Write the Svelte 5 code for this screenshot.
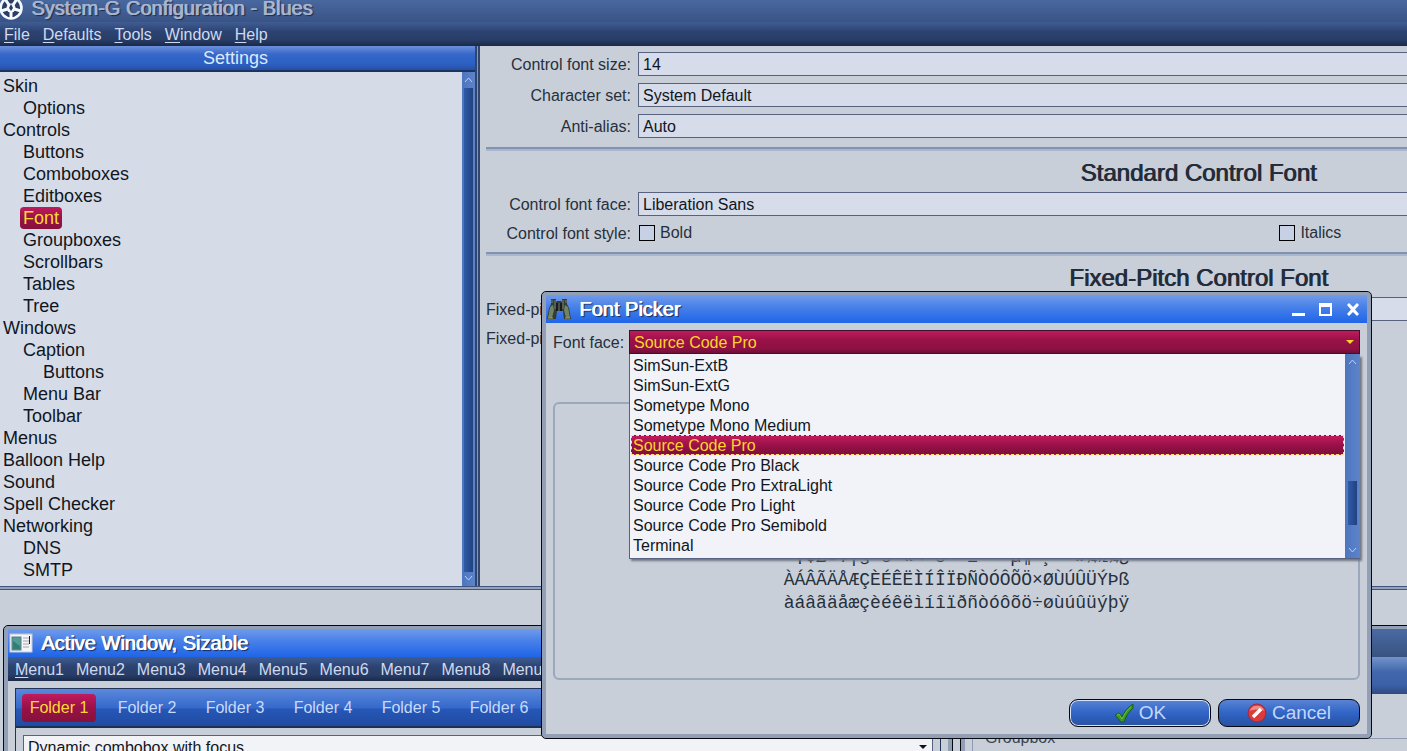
<script>
    var menus = ["File", "Defaults", "Tools", "Window", "Help"];
    var previewMenus = ["Menu1", "Menu2", "Menu3", "Menu4", "Menu5", "Menu6", "Menu7", "Menu8", "Menu9"];
    var folders = ["Folder 1", "Folder 2", "Folder 3", "Folder 4", "Folder 5", "Folder 6"];
    var sections = [
        { name: "Skin", level: 0 },
        { name: "Options", level: 1 },
        { name: "Controls", level: 0 },
        { name: "Buttons", level: 1 },
        { name: "Comboboxes", level: 1 },
        { name: "Editboxes", level: 1 },
        { name: "Font", level: 1 },
        { name: "Groupboxes", level: 1 },
        { name: "Scrollbars", level: 1 },
        { name: "Tables", level: 1 },
        { name: "Tree", level: 1 },
        { name: "Windows", level: 0 },
        { name: "Caption", level: 1 },
        { name: "Buttons", level: 2 },
        { name: "Menu Bar", level: 1 },
        { name: "Toolbar", level: 1 },
        { name: "Menus", level: 0 },
        { name: "Balloon Help", level: 0 },
        { name: "Sound", level: 0 },
        { name: "Spell Checker", level: 0 },
        { name: "Networking", level: 0 },
        { name: "DNS", level: 1 },
        { name: "SMTP", level: 1 }
    ];
    var fonts = [
        "SimSun-ExtB", "SimSun-ExtG", "Sometype Mono", "Sometype Mono Medium",
        "Source Code Pro", "Source Code Pro Black", "Source Code Pro ExtraLight",
        "Source Code Pro Light", "Source Code Pro Semibold", "Terminal"
    ];
    var sample = [
        "\u00a0¡¢£¤¥¦§¨©ª«¬\u00a0®¯°±²³´µ¶·¸¹º»¼½¾¿",
        "ÀÁÂÃÄÅÆÇÈÉÊËÌÍÎÏÐÑÒÓÔÕÖ×ØÙÚÛÜÝÞß",
        "àáâãäåæçèéêëìíîïðñòóôõö÷øùúûüýþÿ"
    ];

    let section = "Font";
    let folder = "Folder 1";
    let fontFace = "Source Code Pro";
</script>

<main>
    <header class="appbar">
        <svg class="logo" viewBox="0 0 24 24">
            <circle cx="12" cy="12" r="10.500" fill="#2b3d63" stroke="#f4f8ff" stroke-width="2.600" />
            <path d="M12 12v10M12 12l-10 3M12 12l10 3M12 12L6 3M12 12l6-9" stroke="#f4f8ff" stroke-width="3" />
            <circle cx="12" cy="12" r="4.500" fill="#f4f8ff" />
            <path d="M12 8l2 4-2 3-2-3z" fill="#2b3d63" />
        </svg>
        <h1>System-G Configuration - Blues</h1>
    </header>
    <nav class="menubar">
        {#each menus as menu}
            <button><u>{menu[0]}</u>{menu.slice(1)}</button>
        {/each}
    </nav>

    <div class="workspace">
        <aside>
            <h2 class="panelhead">Settings</h2>
            <div class="treebox">
                <ul class="tree">
                    {#each sections as item}
                        <li style="padding-left: {item.level * 20}px">
                            <button class:selected={item.name == section} on:click={() => section = item.name}>{item.name}</button>
                        </li>
                    {/each}
                </ul>
                <div class="scroll">
                    <svg viewBox="0 0 9 6"><path d="M1 5l3.500-4L8 5" /></svg>
                    <div class="thumb full"></div>
                    <svg viewBox="0 0 9 6"><path d="M1 1l3.500 4L8 1" /></svg>
                </div>
            </div>
        </aside>

        <section class="form">
            <div class="fields">
                <div class="row first">
                    <label for="size">Control font size:</label>
                    <select id="size"><option>14</option></select>
                </div>
                <div class="row first">
                    <label for="charset">Character set:</label>
                    <select id="charset"><option>System Default</option></select>
                </div>
                <div class="row first">
                    <label for="alias">Anti-alias:</label>
                    <select id="alias"><option>Auto</option></select>
                </div>
                <hr>
                <h3>Standard Control Font</h3>
                <div class="row">
                    <label for="face">Control font face:</label>
                    <select id="face"><option>Liberation Sans</option></select>
                </div>
                <div class="row">
                    <span class="caption">Control font style:</span>
                    <div class="checks">
                        <label><input type="checkbox">Bold</label>
                        <label><input type="checkbox">Italics</label>
                    </div>
                </div>
                <hr>
                <h3>Fixed-Pitch Control Font</h3>
                <div class="row fixed">
                    <label for="fixedface">Fixed-pitch font face:</label>
                    <select id="fixedface"><option></option></select>
                </div>
                <div class="row fixed">
                    <span class="caption">Fixed-pitch font style:</span>
                </div>
            </div>
        </section>
    </div>

    <div class="preview">
        <div class="window active">
            <div class="titlebar">
                <svg class="appicon" viewBox="0 0 24 22">
                    <rect x="1" y="2" width="22" height="18" fill="#f5f6f8" stroke="#c3cbd6" />
                    <rect x="3" y="5" width="9" height="13" fill="#4f9d93" stroke="#5c7690" />
                    <path d="M4 17V9l7 5v3z" fill="#2f7f72" />
                    <path d="M14 6h6M14 9h6M14 12h6M14 15h6" stroke="#a8a0ae" />
                    <path d="M20.500 4v8" stroke="#222" />
                    <path d="M2 2.500h20" stroke="#d2d7df" stroke-dasharray="2 1" />
                </svg>
                <h2>Active Window, Sizable</h2>
            </div>
            <nav class="menubar inner">
                {#each previewMenus as menu, index}
                    <button>{#if index == 0}<u>M</u>{menu.slice(1)}{:else}{menu}{/if}</button>
                {/each}
            </nav>
            <div class="folderbox">
                <div class="folders">
                    {#each folders as name}
                        <button class:selected={name == folder} on:click={() => folder = name}>{name}</button>
                    {/each}
                </div>
                <div class="folderpage">
                    <div class="combo">
                        <select aria-label="Dynamic combobox"><option>Dynamic combobox with focus</option></select>
                        <svg class="arrow" viewBox="0 0 8 4"><path d="M0 0h8L4 4z" fill="#101418" /></svg>
                    </div>
                </div>
            </div>
        </div>
        <div class="window inactive">
            <div class="titlebar"></div>
            <div class="toolbar"></div>
            <fieldset>
                <legend>Groupbox</legend>
            </fieldset>
        </div>
    </div>

    <div class="window dialog" role="dialog" aria-label="Font Picker">
        <div class="titlebar">
            <svg class="appicon" viewBox="0 0 24 22">
                <path d="M4 1h5v3l1-1h4l1 1V1h5v5l2 4 2 11h-7l-1-8h-6l-1 8H0L2 10l2-4z" fill="#343c36" />
                <path d="M3 9l3-2 1 5-2 8H1zM21 9l-3-2-1 5 2 8h4z" fill="#6f8466" />
                <path d="M9 5h6v8H9z" fill="#181c1e" />
                <path d="M5 2v3M8 2v9M16 2v9M19 2v3M12 5v8" stroke="#77807b" />
                <path d="M1 20h5M18 20h5" stroke="#a89d50" />
            </svg>
            <h2>Font Picker</h2>
            <div class="winbuttons">
                <button aria-label="Minimize"><svg viewBox="0 0 14 14"><path d="M0 10h13v3H0z" /></svg></button>
                <button aria-label="Maximize"><svg viewBox="0 0 14 14"><path d="M0 0h13v13H0zM2 4v7h9V4z" fill-rule="evenodd" /></svg></button>
                <button aria-label="Close"><svg viewBox="0 0 14 14"><path d="M3 0l4 4 4-4 2 2-4 4.500 4 4.500-2 2-4-4-4 4-2-2 4-4.500L1 2z" /></svg></button>
            </div>
        </div>
        <div class="dialogbody">
            <div class="facerow">
                <label for="picker">Font face:</label>
                <div class="combo open">
                    <select id="picker" bind:value={fontFace}>
                        {#each fonts as font}
                            <option>{font}</option>
                        {/each}
                    </select>
                    <svg class="arrow" viewBox="0 0 8 4"><path d="M0 0h8L4 4z" fill="#ffd428" /></svg>
                    <div class="popup">
                        <ul>
                            {#each fonts as font}
                                <li><button class:selected={font == fontFace} on:click={() => fontFace = font}>{font}</button></li>
                            {/each}
                        </ul>
                        <div class="scroll">
                            <svg viewBox="0 0 9 6"><path d="M1 5l3.500-4L8 5" /></svg>
                            <div class="thumb"></div>
                            <svg viewBox="0 0 9 6"><path d="M1 1l3.500 4L8 1" /></svg>
                        </div>
                    </div>
                </div>
            </div>
            <div class="sample">
                {#each sample as line}
                    <p>{line}</p>
                {/each}
            </div>
            <div class="actions">
                <button class="default">
                    <svg viewBox="0 0 20 20"><path d="M1 12l4-2 3 4c2-5 6-10 11-13v4c-4 4-7 8-9 14H7z" fill="#3a9a28" stroke="#185c17" /><path d="M3 12l2-1 3 5c3-6 5-9 9-12" fill="none" stroke="#6fc03f" /></svg>
                    OK
                </button>
                <button>
                    <svg viewBox="0 0 20 20"><circle cx="10" cy="10" r="9" fill="#d83c3c" stroke="#a82636" /><path d="M2.500 8a8 8 0 0 1 15 0c-4-2-10-2-15 0z" fill="#f08a88" /><path d="M6 14l8-8" stroke="#fff" stroke-width="3.500" /></svg>
                    Cancel
                </button>
            </div>
        </div>
    </div>
</main>

<style>
    :global(body){
        overflow: hidden;
    }

    main{
        position: relative;
        height: 100vh;
        overflow: hidden;
        display: flex;
        flex-direction: column;
        background-color: #c9cfd9;
        color: #26303c;
        font: 16px/20px "Liberation Sans", Arial, sans-serif;
    }

    main :is(h1, h2, h3, p, ul){
        margin: 0;
        padding: 0;
        list-style: none;
    }

    button, select, input{
        box-sizing: border-box;
        margin: 0;
        padding: 0;
        border: 0;
        border-radius: 0;
        background: none;
        color: inherit;
        font: inherit;
        appearance: none;
    }

    .appbar{
        display: flex;
        flex: none;
        align-items: center;
        box-sizing: border-box;
        height: 22px;
        padding: 0 0 6px 0;
        gap: 8px;
        background: linear-gradient(#48689f, #3a5385);
    }

    .logo{
        width: 24px;
        height: 24px;
        margin-left: -1px;
        flex: none;
    }

    .appbar h1, .titlebar h2{
        font-size: 20px;
        line-height: 22px;
        font-weight: normal;
        color: #a9b5cc;
        text-shadow: 1px 0 0 #a9b5cc, 2px 1px 1px #1b2949;
    }

    .appbar h1{
        line-height: 16px;
    }

    .menubar{
        display: flex;
        flex: none;
        box-sizing: border-box;
        height: 24px;
        padding: 2px 4px 0;
        gap: 13px;
        color: #cfdaf0;
        background: linear-gradient(#3f5d94, #2c4371 40%, #283d67 75%, #1a2947);
        overflow: hidden;
    }

    .inner{
        padding: 2px 7px 0;
        gap: 12px;
    }

    u{
        text-underline-offset: 2px;
    }

    .workspace{
        display: flex;
        flex: none;
        background-color: #95a2b9;
        border-bottom: 4px double #3f5580;
    }

    aside{
        display: flex;
        flex-direction: column;
        width: 475px;
        flex: none;
        border-right: 5px double #30466f;
        background-color: #8697b4;
    }

    .panelhead{
        box-sizing: border-box;
        height: 26px;
        padding-right: 4px !important;
        border-bottom: 2px solid #1b3562;
        background: linear-gradient(#6c90db, #3667c9 35%, #2c60c4 75%, #28509c);
        color: #dde8fb;
        font-size: 18px;
        line-height: 24px;
        font-weight: normal;
        text-align: center;
    }

    .treebox{
        display: flex;
        height: 514px;
    }

    .tree{
        flex: 1;
        padding-top: 3px !important;
        background-color: #d6dce7;
        color: #10161e;
        font-size: 18px;
        line-height: 22px;
    }

    .tree li{
        height: 22px;
    }

    .tree button{
        height: 22px;
        padding: 0 3px;
        border-radius: 4px;
    }

    .tree .selected, .folders .selected{
        color: #ffd932;
        background: linear-gradient(#c01b5b, #98114a 50%, #86113b);
    }

    .scroll{
        display: flex;
        flex-direction: column;
        align-items: center;
        justify-content: space-between;
        box-sizing: border-box;
        width: 13px;
        padding: 5px 0;
        background: linear-gradient(90deg, #4d76c0, #5d83c9);
    }

    .scroll svg{
        width: 9px;
        height: 6px;
        fill: none;
        stroke: #b9d0fa;
    }

    .thumb{
        width: 9px;
        background: linear-gradient(90deg, #2f5ba8, #21427f);
    }

    .full{
        flex: 1;
        margin: 5px 0 3px;
    }

    .form{
        flex: 1;
        min-width: 0;
        overflow: hidden;
        background-color: #c9cfd9;
    }

    /* the pane is wider than the screen and runs off to the right */
    .fields{
        box-sizing: border-box;
        width: 155%;
        padding: 6px;
    }

    .row{
        display: flex;
        align-items: center;
        height: 24px;
        margin-bottom: 5px;
        gap: 7px;
    }

    .first{
        margin-bottom: 7px;
    }

    .row > label, .caption{
        display: flex;
        justify-content: flex-end;
        width: 145px;
        padding-top: 2px;
        flex: none;
        white-space: nowrap;
    }

    .fixed > label, .fixed .caption{
        justify-content: flex-start;
    }

    select{
        flex: 1;
        height: 24px;
        padding: 2px 4px 0;
        border: 1px solid #56627f;
        background-color: #d6dce9;
        color: #10161e;
    }

    .checks{
        display: grid;
        grid-template-columns: 1fr 1fr;
        column-gap: 8px;
        flex: 1;
    }

    .checks label{
        display: flex;
        align-items: center;
        gap: 5px;
    }

    .checks input{
        width: 16px;
        height: 16px;
        margin: 0 0 0 1px;
        border: 1px solid #000;
        background-color: #c6d1e5;
    }

    hr{
        height: 2px;
        margin: 7px 0 0;
        border: 0;
        border-top: 2px solid #8293b2;
        background-color: #a9b6cd;
    }

    .first + hr{
        margin-top: 9px;
    }

    h3{
        height: 41px;
        font-size: 24px;
        line-height: 43px;
        font-weight: normal;
        text-align: center;
        color: #232c3a;
        text-shadow: 1px 0 0 #232c3a;
    }

    .preview{
        display: flex;
        flex: 1;
        min-height: 0;
        padding: 35px 0 0 3px;
        gap: 7px;
    }

    .window{
        display: flex;
        flex-direction: column;
        box-sizing: border-box;
        border: 1px solid #05080e;
        border-radius: 5px 5px 0 0;
        box-shadow: inset 0 0 0 4px #929fb5;
        background-color: #c9cfd9;
        padding: 3px 4px 4px;
    }

    /* both preview windows go on below the edge of the screen */
    .active, .inactive{
        height: 240px;
        flex: none;
    }

    .active{
        width: 950px;
    }

    .inactive{
        width: 640px;
    }

    .titlebar{
        display: flex;
        flex: none;
        align-items: center;
        height: 28px;
        gap: 8px;
        padding: 0 7px 0 1px;
        background: linear-gradient(#719bea, #4a82e8 40%, #1f65e8);
    }

    .titlebar h2{
        color: #fff;
        text-shadow: 1px 0 0 #fff, 2px 1px 1px #16264e;
    }

    .appicon{
        width: 24px;
        height: 22px;
        flex: none;
    }

    .inactive .titlebar{
        background: linear-gradient(#4a6aa4, #38537f);
    }

    .toolbar{
        height: 37px;
        background: linear-gradient(#7393cc, #4267ab 40%, #3c61a6 75%, #2f4b80);
    }

    fieldset{
        margin: 34px 7px 0;
        flex: 1;
        border: 1px solid #8d9bb3;
    }

    legend{
        padding: 0 2px;
        margin-left: -2px;
        color: #3a4656;
    }

    .folderbox{
        margin: 7px;
        border: 1px solid #22335a;
        flex: 1;
    }

    .folders{
        display: flex;
        align-items: center;
        height: 37px;
        gap: 14px;
        padding: 0 6px;
        border-bottom: 2px solid #1c2f55;
        background: linear-gradient(#5b88db, #3569cb 50%, #2657b8 55%, #204b9f);
        color: #c8dafa;
    }

    .folders button{
        width: 74px;
        height: 28px;
        border-radius: 4px;
    }

    .folderpage{
        padding: 7px;
    }

    .combo{
        position: relative;
        display: flex;
        flex: 1;
    }

    .combo select{
        background-color: #f1f3f7;
    }

    .arrow{
        position: absolute;
        right: 6px;
        top: 10px;
        width: 8px;
        height: 4px;
    }

    .dialog{
        position: absolute;
        left: 541px;
        top: 291px;
        width: 831px;
        height: 448px;
        border-radius: 5px;
    }

    .winbuttons{
        display: flex;
        gap: 13px;
        margin-left: auto;
        padding-top: 2px;
    }

    .winbuttons button{
        width: 14px;
        height: 14px;
    }

    .winbuttons svg{
        display: block;
        fill: #fff;
    }

    .dialogbody{
        display: flex;
        flex-direction: column;
        flex: 1;
        padding: 7px;
    }

    .facerow{
        display: flex;
        align-items: center;
        justify-content: space-between;
    }

    .facerow label{
        padding-top: 2px;
    }

    .facerow .combo{
        flex: 0 0 731px;
    }

    .open select{
        border-color: #3c1030;
        background: linear-gradient(#c01b5b, #9a1148 40%, #8e1143 80%, #6c1036);
        color: #ffd428;
    }

    .popup{
        position: absolute;
        left: 0;
        right: 0;
        top: 24px;
        display: flex;
        height: 204px;
        border-left: 1px solid #56627f;
        background-color: #f1f3f8;
        box-shadow: 0 1px 0 #56627f, 2px 3px 2px #6f7684;
        color: #10161e;
        z-index: 2;
    }

    .popup ul{
        flex: 1;
        padding: 1px 1px 0;
    }

    .popup li button{
        display: block;
        width: 100%;
        height: 20px;
        padding: 1px 0 0 2px;
        text-align: left;
    }

    .popup li .selected{
        padding: 1px 0 0 1px;
        border: 1px dashed #ffe36a;
        line-height: 18px;
        background: linear-gradient(#c01b5b, #9a1148 50%, #7c103c);
        color: #ffd428;
    }

    .popup .scroll{
        width: 15px;
    }

    .popup .thumb{
        height: 44px;
        margin-top: 94px;
    }

    .sample{
        display: flex;
        flex-direction: column;
        justify-content: flex-end;
        align-items: center;
        flex: 1;
        margin: 48px 0 19px;
        padding-bottom: 63px;
        border: 2px solid #9ba8bc;
        border-radius: 6px;
    }

    .sample p{
        font: 18px/23px "Liberation Mono", "Courier New", monospace;
        white-space: pre;
    }

    .actions{
        display: flex;
        justify-content: flex-end;
        gap: 7px;
    }

    .actions button{
        display: flex;
        align-items: center;
        justify-content: center;
        width: 142px;
        height: 28px;
        gap: 5px;
        border: 1px solid #05080e;
        border-radius: 9px;
        background: linear-gradient(#5a84d4, #3467c8 45%, #2c5cb9 70%, #2a53a0);
        color: #c3d7fb;
        font-size: 19px;
    }

    .actions .default{
        box-shadow: inset 0 0 0 1px #d6e2f8;
    }

    .actions svg{
        width: 20px;
        height: 20px;
    }
</style>
